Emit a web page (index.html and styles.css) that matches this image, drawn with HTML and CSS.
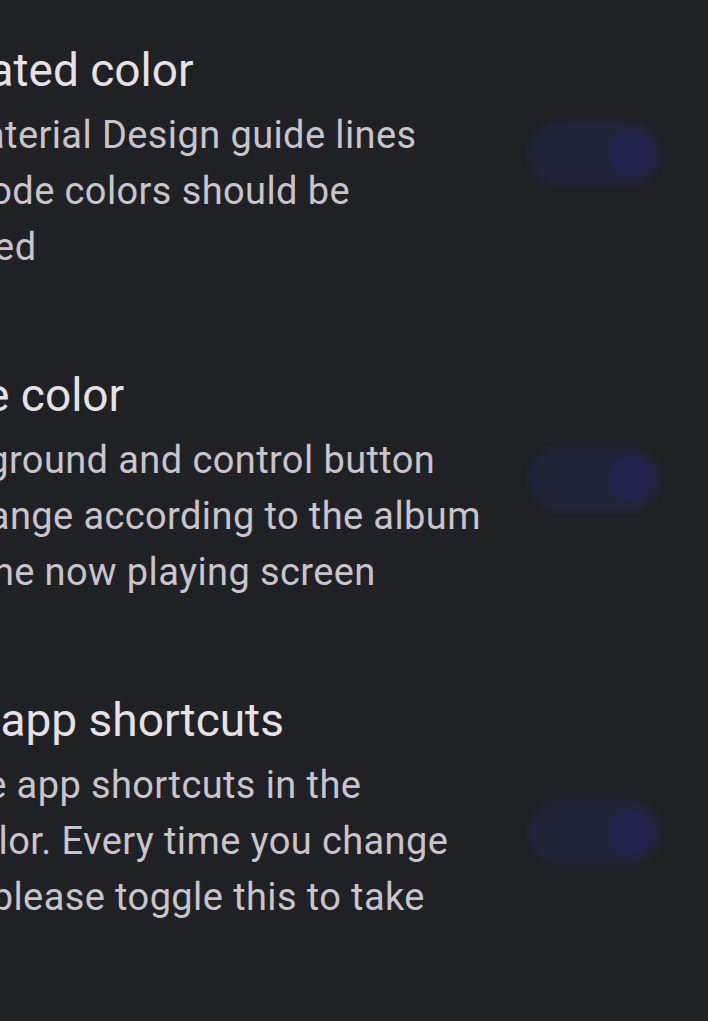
FILE: index.html
```html
<!DOCTYPE html>
<html lang="en">
<head>
  <meta charset="UTF-8">
  <meta name="viewport" content="width=device-width, initial-scale=1.0">
  <title>Settings</title>
  <link rel="stylesheet" href="styles.css">
</head>
<body>
  <div class="pref-list">
    <!-- Desaturated color -->
    <div class="pref-row">
      <div class="pref-text">
        <h2 class="pref-title">Desaturated color</h2>
        <p class="pref-summary">As per Material Design guide lines<br>in dark mode colors should be<br>desaturated</p>
      </div>
      <div class="switch"><span class="thumb"></span></div>
    </div>

    <!-- Adaptive color -->
    <div class="pref-row">
      <div class="pref-text">
        <h2 class="pref-title">Adaptive color</h2>
        <p class="pref-summary">The background and control button<br>colors change according to the album<br>art from the now playing screen</p>
      </div>
      <div class="switch"><span class="thumb"></span></div>
    </div>

    <!-- Colored app shortcuts -->
    <div class="pref-row">
      <div class="pref-text">
        <h2 class="pref-title">Colored app shortcuts</h2>
        <p class="pref-summary">Colors the app shortcuts in the<br>accent color. Every time you change<br>the color please toggle this to take<br>effect</p>
      </div>
      <div class="switch"><span class="thumb"></span></div>
    </div>
  </div>
</body>
</html>
```

FILE: styles.css
```css
* {
  margin: 0;
  padding: 0;
  box-sizing: border-box;
}

body {
  background: #202125;
  font-family: Roboto, "Noto Sans", sans-serif;
  overflow: hidden;
  height: 100vh;
}

.pref-list {
  margin-top: -4px;
  margin-left: -170px;
}

.pref-row {
  display: flex;
  align-items: center;
  padding: 46px 46px 46px 0;
}

.pref-text {
  flex: 1;
}

.pref-title {
  font-size: 46px;
  font-weight: 400;
  line-height: 56px;
  color: #e6e1e7;
  margin-bottom: 9px;
}

.pref-summary {
  font-size: 38px;
  line-height: 56px;
  letter-spacing: 0.4px;
  color: #c9c4cc;
}

.switch {
  width: 135px;
  height: 66px;
  margin-bottom: 9px;
  border-radius: 33px;
  background: #212336;
  display: flex;
  align-items: center;
  justify-content: flex-end;
  padding-right: 9px;
  filter: blur(2px);
}

.thumb {
  width: 46px;
  height: 46px;
  border-radius: 50%;
  background: #1f234c;
}
```
